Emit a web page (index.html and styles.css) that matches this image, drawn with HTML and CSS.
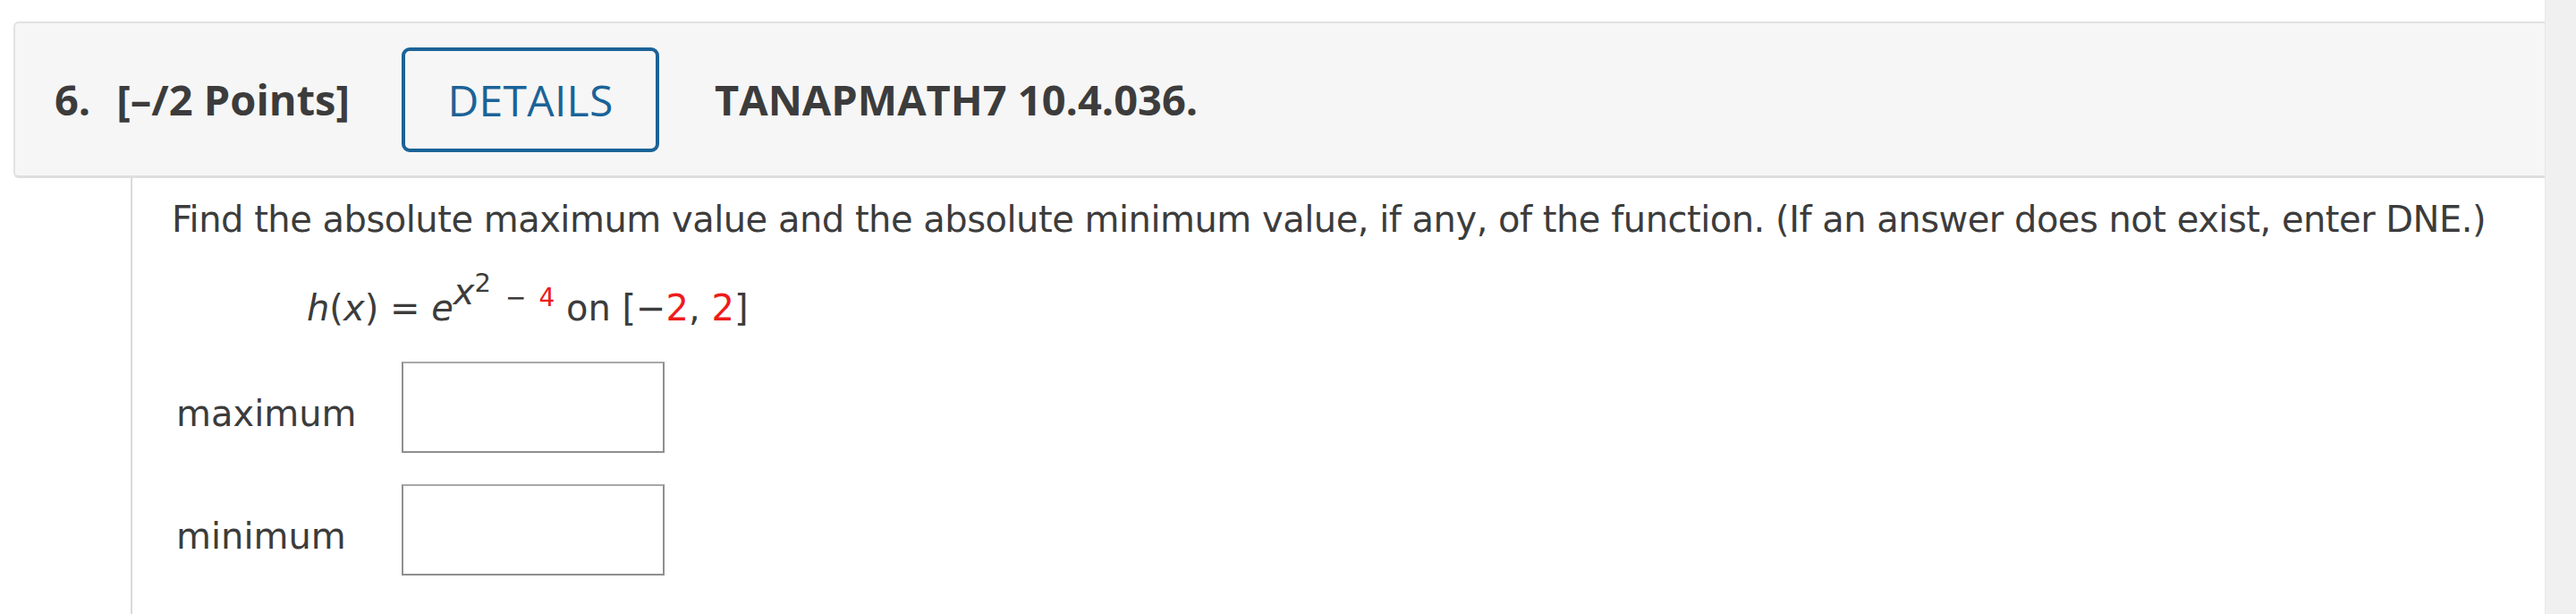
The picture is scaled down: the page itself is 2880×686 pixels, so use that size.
FILE: index.html
```html
<!DOCTYPE html>
<html>
<head>
<meta charset="utf-8">
<link rel="stylesheet" href="styles.css">
</head>
<body>
<div class="viewport">
  <div class="page">
    <div class="qheader">
      <span class="qnum">6.</span>
      <span class="qpoints">[–/2 Points]</span>
      <button class="details">DETAILS</button>
      <span class="qid">TANAPMATH7 10.4.036.</span>
    </div>
    <div class="qbody">
      <p class="prompt">Find the absolute maximum value and the absolute minimum value, if any, of the function. (If an answer does not exist, enter DNE.)</p>
      <div class="equation">
        <span class="var">h</span>(<span class="var">x</span>) = <span class="var">e</span><span class="sup"><span class="var">x</span><span class="sup2">2</span><span class="supsmall"><span class="minus">−</span><span class="red">4</span></span></span> on [−<span class="red">2</span>, <span class="red">2</span>]
      </div>
      <div class="answer-row">
        <span class="label">maximum</span>
        <input class="answer" type="text">
      </div>
      <div class="answer-row">
        <span class="label">minimum</span>
        <input class="answer" type="text">
      </div>
    </div>
  </div>
  <div class="scrollbar"></div>
</div>
</body>
</html>
```

FILE: styles.css
```css
html, body {
  margin: 0;
  padding: 0;
  background: #ffffff;
}

.viewport {
  display: flex;
  width: 2880px;
  height: 686px;
  overflow: hidden;
}

.page {
  flex: 1;
  padding-top: 24px;
  padding-left: 15px;
  min-width: 0;
}

.scrollbar {
  width: 34px;
  background: #f0f0f0;
  border-left: 1px solid #e8e8e8;
}

.qheader {
  display: flex;
  align-items: center;
  height: 170px;
  background: #f6f6f6;
  border-top: 2px solid #e2e2e2;
  border-left: 2px solid #e2e2e2;
  border-bottom: 3px solid #dedede;
  border-radius: 6px 0 0 6px;
  padding-left: 44px;
  font-family: "Open Sans", "Liberation Sans", sans-serif;
  font-size: 47px;
  color: #3c3c3c;
}

.qnum {
  font-weight: 700;
  margin-right: 29px;
}

.qpoints {
  font-weight: 700;
}

.details {
  margin-left: 58px;
  margin-right: 62px;
  width: 288px;
  height: 117px;
  box-sizing: border-box;
  background: transparent;
  border: 4px solid #1b6397;
  border-radius: 9px;
  color: #1b6397;
  font-family: "Open Sans", "Liberation Sans", sans-serif;
  font-size: 48px;
  font-weight: 400;
  letter-spacing: 0.3px;
  padding: 0;
}

.qid {
  font-weight: 700;
}

.qbody {
  margin-left: 131px;
  border-left: 2px solid #dadada;
  padding-left: 44px;
  padding-top: 16px;
  height: 500px;
  font-family: "DejaVu Sans", Verdana, sans-serif;
  font-size: 40px;
  color: #3c3c3c;
}

.prompt {
  margin: 0;
  line-height: 60px;
  letter-spacing: -0.5px;
  white-space: nowrap;
}

.equation {
  margin-left: 151px;
  margin-top: 39px;
  line-height: 60px;
  white-space: nowrap;
}

.var {
  font-style: italic;
}

.sup {
  position: relative;
  top: -18px;
}

.sup2 {
  font-size: 29px;
  position: relative;
  top: -14px;
}

.supsmall {
  font-size: 28px;
  position: relative;
  top: 2px;
}

.minus {
  padding: 0 14px 0 16px;
}

.red {
  color: #ee1b1b;
}

.answer-row {
  display: flex;
  align-items: center;
  margin-top: 25px;
}

.answer-row + .answer-row {
  margin-top: 35px;
}

.label {
  width: 257px;
  padding-left: 5px;
  box-sizing: border-box;
  padding-top: 14px;
}

.answer {
  width: 294px;
  height: 102px;
  box-sizing: border-box;
  border: 2px solid #8f8f8f;
  border-top-color: #a8a8a8;
  background: #ffffff;
  margin: 0;
  padding: 0;
}
```
